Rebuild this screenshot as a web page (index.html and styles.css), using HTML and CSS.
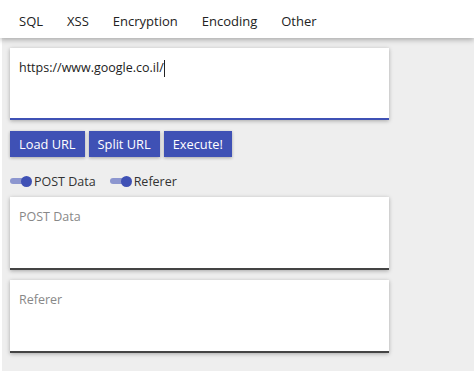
FILE: index.html
```html
<!DOCTYPE html>
<html>
<head>
<meta charset="utf-8">
<link rel="stylesheet" href="styles.css">
</head>
<body>
<div class="header">
  <span class="tab">SQL</span>
  <span class="tab">XSS</span>
  <span class="tab">Encryption</span>
  <span class="tab">Encoding</span>
  <span class="tab">Other</span>
</div>
<div class="main">
  <div class="field url"><span class="val">https://www.google.co.il/</span><span class="caret"></span></div>
  <div class="buttons">
    <button class="btn">Load URL</button>
    <button class="btn">Split URL</button>
    <button class="btn">Execute!</button>
  </div>
  <div class="toggles">
    <div class="toggle"><span class="switch"><span class="track"></span><span class="knob"></span></span><span class="tlabel">POST Data</span></div>
    <div class="toggle"><span class="switch"><span class="track"></span><span class="knob"></span></span><span class="tlabel">Referer</span></div>
  </div>
  <div class="field dark"><span class="ph">POST Data</span></div>
  <div class="field dark second"><span class="ph">Referer</span></div>
</div>
</body>
</html>
```
FILE: styles.css
```css
html, body {
  margin: 0;
  padding: 0;
  background: #fff;
  font-family: "Open Sans", "Noto Sans", sans-serif;
  font-size: 12.5px;
  color: #222;
}
.header {
  position: relative;
  z-index: 2;
  height: 38px;
  box-sizing: border-box;
  background: #fff;
  display: flex;
  align-items: center;
  gap: 24px;
  padding: 3px 0 0 19px;
  box-shadow: 0 2px 5px rgba(0,0,0,0.28);
}
.tab {
  color: #222;
  font-size: 13px;
  line-height: 20px;
}
.main {
  margin-left: 2px;
  height: 333px;
  background: #eeeeee;
  padding: 10px 0 0 8px;
  box-sizing: border-box;
}
.field {
  width: 379px;
  height: 72px;
  box-sizing: border-box;
  background: #fff;
  box-shadow: 0 1px 4px rgba(0,0,0,0.3);
  padding: 10px 9px;
  line-height: 20px;
  display: flex;
  align-items: flex-start;
}
.url {
  border-bottom: 2px solid #3f51b5;
}
.val { color: #222; }
.caret {
  display: inline-block;
  width: 1px;
  height: 17px;
  margin-top: 2px;
  background: #222;
}
.dark {
  height: 73px;
  border-bottom: 2px solid #444;
}
.second { margin-top: 10px; }
.ph { color: #888; }
.buttons {
  display: flex;
  gap: 4px;
  margin-top: 11px;
}
.btn {
  font-family: inherit;
  font-size: 12.8px;
  color: #fff;
  background: #3f51b5;
  border: none;
  height: 26px;
  padding: 0 9px;
  box-shadow: 0 1px 3px rgba(0,0,0,0.3);
}
.toggles {
  display: flex;
  gap: 14px;
  height: 32px;
  padding-top: 8px;
  align-items: center;
}
.toggle {
  display: flex;
  align-items: center;
  color: #333;
}
.switch {
  position: relative;
  width: 23px;
  height: 12px;
  display: inline-block;
}
.track {
  position: absolute;
  left: 0;
  top: 3px;
  width: 20px;
  height: 6px;
  border-radius: 3px;
  background: #8c96cf;
}
.knob {
  position: absolute;
  left: 11px;
  top: 0.5px;
  width: 11px;
  height: 11px;
  border-radius: 50%;
  background: #3f51b5;
}
.tlabel { margin-left: 1px; }
```
